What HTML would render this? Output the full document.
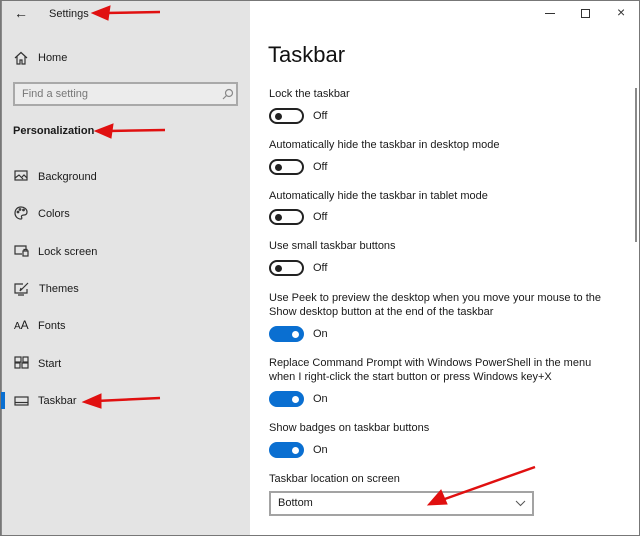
<!DOCTYPE html>
<html><head><meta charset="utf-8"><style>
*{margin:0;padding:0;box-sizing:border-box}
body{width:640px;height:536px;overflow:hidden;font-family:"Liberation Sans",sans-serif;font-size:11px;color:#1a1a1a;position:relative;background:#fff}
.left{position:absolute;left:0;top:0;width:250px;height:536px;background:#e4e4e4;border-left:2px solid #8a8a8a}
.t{position:absolute;white-space:nowrap}
.tg{position:absolute;width:35px;height:16px;border-radius:8px;border:2px solid #222;left:269px}
.tg::after{content:"";position:absolute;left:4px;top:3px;width:7px;height:7px;border-radius:50%;background:#222}
.on{background:#0a6fd1;border-color:#0a6fd1}
.on::after{background:#fff;left:21px}
.ic{position:absolute;left:12px;stroke:#333;fill:none;stroke-width:1.2}
</style></head><body>
<div style="position:absolute;left:0;top:0;width:640px;height:536px;border:1px solid #777;z-index:5;pointer-events:none"></div>
<div class="left">
<div class="t" style="left:12px;top:5px;font-size:14px">&#8592;</div>
<div class="t" style="left:47px;top:8px">Settings</div>
<svg class="ic" style="top:51px" width="14" height="14" viewBox="0 0 14 14"><path d="M1 7 7 1.5 13 7M3 5.5V13H6V9H8V13H11V5.5"/></svg>
<div class="t" style="left:36px;top:52px">Home</div>
<div style="position:absolute;left:11px;top:82px;width:225px;height:24px;border:2px solid #a9a9a9;background:#ececec"></div>
<div class="t" style="left:20px;top:88px;color:#777">Find a setting</div>
<svg class="ic" style="left:220px;top:88px;stroke:#888" width="12" height="12" viewBox="0 0 12 12"><circle cx="7" cy="5" r="3.5"/><path d="M4.5 7.5 1 11"/></svg>
<div class="t" style="left:11px;top:125px;font-weight:bold">Personalization</div>
<svg class="ic" style="top:170px" width="14" height="12" viewBox="0 0 14 12"><rect x="1" y="1" width="12" height="9"/><path d="M1 8 5 5 9 9M8 7l2-2 3 3"/></svg>
<div class="t" style="left:36px;top:171px">Background</div>
<svg class="ic" style="top:206px" width="14" height="14" viewBox="0 0 14 14"><path d="M7 1C3 1 1 4 1 7s2 6 6 6c1 0 1-1 .5-2S8 9 10 9s3-1 3-3C13 3 10 1 7 1z"/><circle cx="4" cy="6" r=".8"/><circle cx="6" cy="3.5" r=".8"/><circle cx="9.5" cy="4" r=".8"/></svg>
<div class="t" style="left:36px;top:208px">Colors</div>
<svg class="ic" style="top:245px" width="16" height="12" viewBox="0 0 16 12"><path d="M12 4V1H1V9H8"/><rect x="9" y="6" width="5" height="5"/><path d="M10 6V4.5h3V6"/></svg>
<div class="t" style="left:36px;top:246px">Lock screen</div>
<svg class="ic" style="top:282px" width="16" height="14" viewBox="0 0 16 14"><path d="M9 2H1v9h12V7M4 13h6"/><path d="M6 9 14 1M6 9l1-3"/></svg>
<div class="t" style="left:37px;top:283px">Themes</div>
<div class="t" style="left:12px;top:318px;font-size:10px">A<span style="font-size:12px">A</span></div>
<div class="t" style="left:36px;top:320px">Fonts</div>
<svg class="ic" style="top:356px" width="16" height="13" viewBox="0 0 16 13"><rect x="1" y="1" width="6" height="5"/><rect x="9" y="1" width="5" height="5"/><rect x="1" y="7" width="5" height="5"/><rect x="8" y="7" width="6" height="5"/></svg>
<div class="t" style="left:36px;top:358px">Start</div>
<svg class="ic" style="top:396px" width="15" height="10" viewBox="0 0 15 10"><rect x="1" y="1" width="13" height="8"/><path d="M1 6.5h13"/></svg>
<div style="position:absolute;left:-1px;top:392px;width:4px;height:17px;background:#0a6fd1"></div>
<div class="t" style="left:36px;top:395px">Taskbar</div>
</div>
<div style="position:absolute;left:545px;top:13px;width:10px;height:1px;background:#333"></div>
<div style="position:absolute;left:581px;top:9px;width:9px;height:9px;border:1px solid #333"></div>
<div class="t" style="left:617px;top:4px;font-size:14px;color:#333">&#215;</div>
<div style="position:absolute;left:635px;top:88px;width:2px;height:154px;background:#8a8a8a"></div>
<div class="t" style="left:268px;top:42px;font-size:22px;color:#111">Taskbar</div>
<div class="t" style="left:269px;top:88px">Lock the taskbar</div>
<div class="tg" style="top:108px"></div><div class="t" style="left:313px;top:110px">Off</div>
<div class="t" style="left:269px;top:139px">Automatically hide the taskbar in desktop mode</div>
<div class="tg" style="top:159px"></div><div class="t" style="left:313px;top:161px">Off</div>
<div class="t" style="left:269px;top:190px">Automatically hide the taskbar in tablet mode</div>
<div class="tg" style="top:209px"></div><div class="t" style="left:313px;top:211px">Off</div>
<div class="t" style="left:269px;top:240px">Use small taskbar buttons</div>
<div class="tg" style="top:260px"></div><div class="t" style="left:313px;top:262px">Off</div>
<div class="t" style="left:269px;top:291px;line-height:14px">Use Peek to preview the desktop when you move your mouse to the<br>Show desktop button at the end of the taskbar</div>
<div class="tg on" style="top:326px"></div><div class="t" style="left:313px;top:328px">On</div>
<div class="t" style="left:269px;top:356px;line-height:14px">Replace Command Prompt with Windows PowerShell in the menu<br>when I right-click the start button or press Windows key+X</div>
<div class="tg on" style="top:391px"></div><div class="t" style="left:313px;top:393px">On</div>
<div class="t" style="left:269px;top:422px">Show badges on taskbar buttons</div>
<div class="tg on" style="top:442px"></div><div class="t" style="left:313px;top:444px">On</div>
<div class="t" style="left:269px;top:473px">Taskbar location on screen</div>
<div style="position:absolute;left:269px;top:491px;width:265px;height:25px;border:2px solid #a3a3a3"></div>
<div class="t" style="left:278px;top:497px">Bottom</div>
<svg style="position:absolute;left:515px;top:500px" width="11" height="7" viewBox="0 0 11 7"><path d="M1 1 5.5 5.5 10 1" stroke="#555" fill="none"/></svg>
<svg style="position:absolute;left:0;top:0;z-index:6" width="640" height="536">
<g fill="#e01010" stroke="#e01010" stroke-width="2.5">
<line x1="160" y1="12" x2="105" y2="13"/><polygon points="92,13 110,6 108,20" stroke-width="1"/>
<line x1="165" y1="130" x2="108" y2="131"/><polygon points="95,131 113,124 111,138" stroke-width="1"/>
<line x1="160" y1="398" x2="96" y2="401"/><polygon points="83,402 101,394 101,408" stroke-width="1"/>
<line x1="535" y1="467" x2="442" y2="500"/><polygon points="428,505 441,490 447,504" stroke-width="1"/>
</g></svg>
</body></html>
